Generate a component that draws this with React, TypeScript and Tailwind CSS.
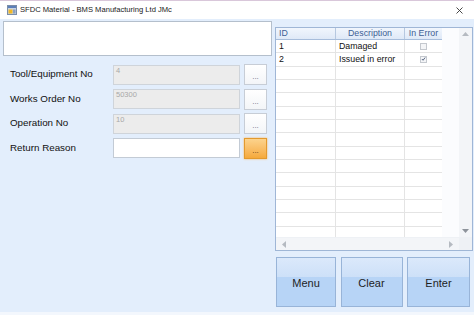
import React from "react";

const fields = [
  { label: "Tool/Equipment No", value: "4" },
  { label: "Works Order No", value: "50300" },
  { label: "Operation No", value: "10" },
];

const rows = [
  { id: "1", desc: "Damaged", err: false },
  { id: "2", desc: "Issued in error", err: true },
];

function CheckBox({ checked }: { checked: boolean }) {
  return (
    <div className="w-[7px] h-[7px] border border-[#c4c8ce] bg-[#f4f5f7] flex items-center justify-center">
      {checked && (
        <svg width="6" height="6" viewBox="0 0 6 6">
          <path d="M1 3 L2.5 4.5 L5 1.2" fill="none" stroke="#4a5a78" strokeWidth="1.1" />
        </svg>
      )}
    </div>
  );
}

function DotsButton({ active }: { active?: boolean }) {
  return (
    <div
      className={`w-[23px] h-[21px] flex items-end justify-center pb-[3px] text-[8px] leading-none ${
        active
          ? "border border-[#e39a2e] bg-gradient-to-b from-[#fcd38c] to-[#f5a93a] text-[#5a3a10] shadow-[0_0_2px_#f7b860]"
          : "border border-[#c7cdd6] bg-gradient-to-b from-white to-[#f3f5f8] text-[#6b7280]"
      }`}
    >
      ...
    </div>
  );
}

function BigButton({ label }: { label: string }) {
  return (
    <div className="h-[50px] border border-[#98b4d8] flex flex-col">
      <div className="h-[19px] bg-gradient-to-b from-[#dbe9fb] to-[#cde0f8]" />
      <div className="flex-1 bg-[#b7d4f6] flex items-start justify-center pt-[1px] text-[11px] text-[#1e1e1e] leading-none">
        {label}
      </div>
    </div>
  );
}

export default function App() {
  const empty = Array.from({ length: 14 });
  return (
    <div className="w-[474px] h-[315px] bg-[#e3eefc] flex flex-col overflow-hidden font-['Liberation_Sans',Arial,sans-serif]">
      {/* title bar */}
      <div className="h-[19px] bg-white border-t border-[#d9c7da] flex items-center pl-[7px] pr-[7px] shrink-0">
        <svg width="10" height="10" viewBox="0 0 10 10" className="mr-[3px]">
          <rect x="0.5" y="0.5" width="9" height="9" fill="#c9d3e0" stroke="#7b8ea8" />
          <rect x="1" y="1" width="8" height="2" fill="#5c7fb8" />
          <rect x="1.5" y="4.5" width="4" height="4" fill="#f2b824" />
          <rect x="6" y="4.5" width="2.5" height="4" fill="#8aa0c0" />
        </svg>
        <span className="text-[7.6px] text-[#1a1a1a]">SFDC Material - BMS Manufacturing Ltd JMc</span>
        <svg width="7" height="7" viewBox="0 0 7 7" className="ml-auto mr-[4px]">
          <path d="M0.5 0.5 L6.5 6.5 M6.5 0.5 L0.5 6.5" stroke="#333" strokeWidth="0.9" />
        </svg>
      </div>

      <div className="flex flex-1">
        {/* left panel */}
        <div className="w-[276px] flex flex-col">
          <div className="mt-[2px] ml-[3px] w-[269px] h-[35px] bg-white border border-[#b4bfcc]" />
          <div className="mt-[8px] flex flex-col gap-[3.5px]">
            {fields.map((f) => (
              <div key={f.label} className="flex items-center h-[21px]">
                <div className="w-[113px] pl-[10px] text-[9.8px] text-[#111]">{f.label}</div>
                <div className="w-[127px] h-[20px] bg-[#ececec] border border-[#cfd4da] text-[7.5px] text-[#a8a8a8] pl-[2px] pt-[1px] leading-none">
                  {f.value}
                </div>
                <div className="ml-[4px]">
                  <DotsButton />
                </div>
              </div>
            ))}
            <div className="flex items-center h-[21px]">
              <div className="w-[113px] pl-[10px] text-[9.8px] text-[#111]">Return Reason</div>
              <div className="w-[127px] h-[20px] bg-white border border-[#c3cbd5]" />
              <div className="ml-[4px]">
                <DotsButton active />
              </div>
            </div>
          </div>
        </div>

        {/* right panel */}
        <div className="flex-1 flex flex-col pr-[1px]">
          <div className="mt-[8px] h-[224px] border border-[#9fb6d6] bg-white flex flex-col">
            <div className="flex flex-1 overflow-hidden">
              <div className="w-[166px] flex flex-col overflow-hidden">
                <div className="h-[12px] flex bg-gradient-to-b from-[#f1f6fd] to-[#dfe9f7] border-b border-[#a7bddb] text-[8.8px] text-[#3d5f94] leading-none shrink-0">
                  <div className="w-[60px] pl-[3px] flex items-center border-r border-[#b6c8e0]">ID</div>
                  <div className="w-[69px] flex items-center justify-center border-r border-[#b6c8e0]">Description</div>
                  <div className="w-[37px] flex items-center justify-center">In Error</div>
                </div>
                {rows.map((r) => (
                  <div key={r.id} className="h-[13.33px] flex border-b border-[#e4e4e4] text-[8.8px] text-[#111] leading-none shrink-0">
                    <div className="w-[60px] pl-[3px] flex items-center border-r border-[#e4e4e4]">{r.id}</div>
                    <div className="w-[69px] pl-[3px] flex items-center border-r border-[#e4e4e4]">{r.desc}</div>
                    <div className="w-[37px] flex items-center justify-center">
                      <CheckBox checked={r.err} />
                    </div>
                  </div>
                ))}
                {empty.map((_, i) => (
                  <div key={i} className="h-[13.33px] flex border-b border-[#e4e4e4] shrink-0">
                    <div className="w-[60px] border-r border-[#e4e4e4]" />
                    <div className="w-[69px] border-r border-[#e4e4e4]" />
                    <div className="w-[37px]" />
                  </div>
                ))}
              </div>
              <div className="w-[17px] bg-[#fbfcfe]" />
              <div className="w-[13px] bg-[#f3f5f8] flex flex-col items-center justify-between py-[4px]">
                <svg width="7" height="4" viewBox="0 0 7 4">
                  <path d="M0 4 L3.5 0 L7 4 Z" fill="#b5bac1" />
                </svg>
                <svg width="7" height="4" viewBox="0 0 7 4">
                  <path d="M0 0 L3.5 4 L7 0 Z" fill="#8d939b" />
                </svg>
              </div>
            </div>
            <div className="h-[13px] flex shrink-0 border-t border-[#eef1f5]">
              <div className="flex-1 bg-[#f3f5f8] flex items-center justify-between px-[6px]">
                <svg width="4" height="7" viewBox="0 0 4 7">
                  <path d="M4 0 L0 3.5 L4 7 Z" fill="#b5bac1" />
                </svg>
                <svg width="4" height="7" viewBox="0 0 4 7">
                  <path d="M0 0 L4 3.5 L0 7 Z" fill="#b5bac1" />
                </svg>
              </div>
              <div className="w-[13px] bg-[#eef1f5]" />
            </div>
          </div>
          <div className="mt-[6px] ml-[1px] mr-[1px] grid grid-cols-[60px_62px_63px] gap-[4.5px]">
            <BigButton label="Menu" />
            <BigButton label="Clear" />
            <BigButton label="Enter" />
          </div>
        </div>
      </div>
      <div className="h-[3px] bg-[#f3f7fd] shrink-0" />
    </div>
  );
}
